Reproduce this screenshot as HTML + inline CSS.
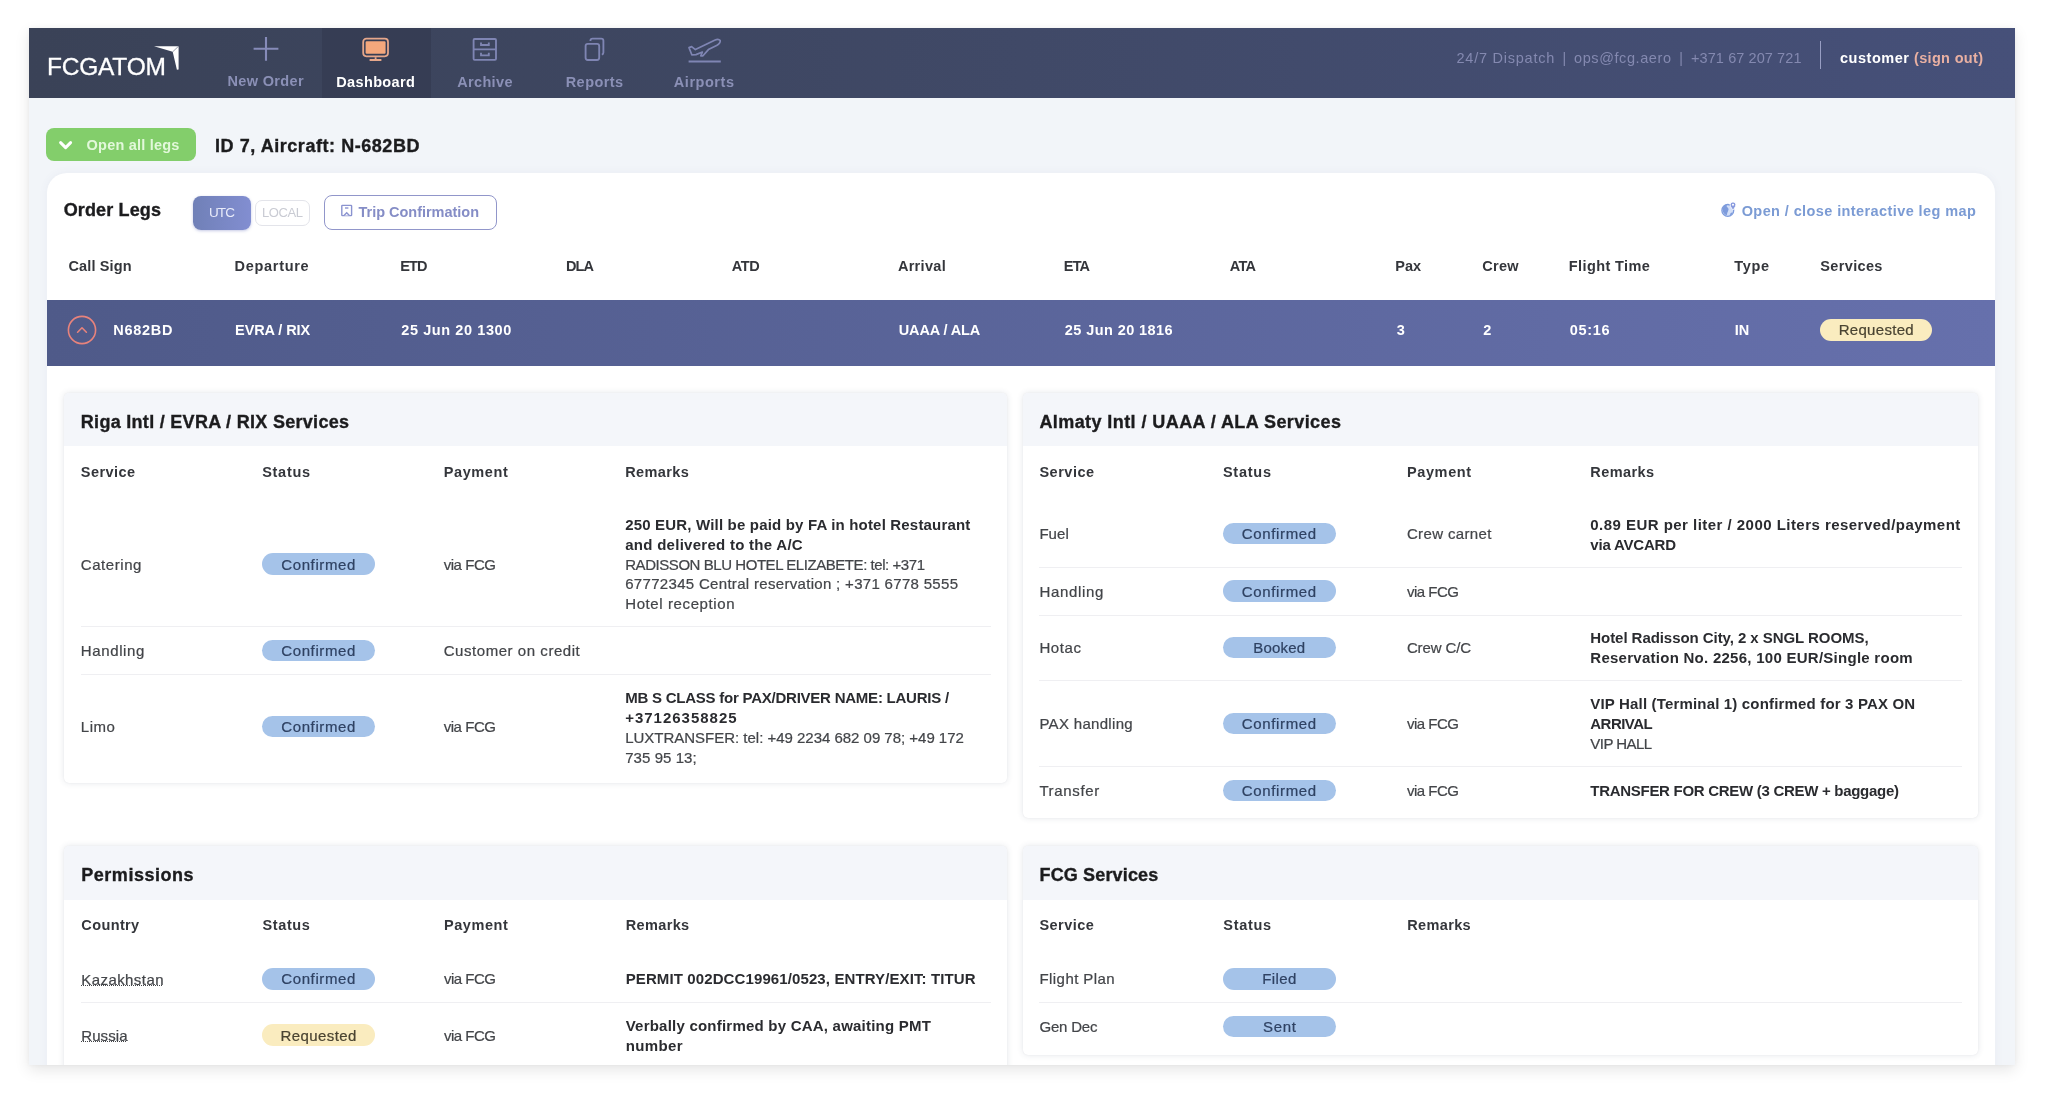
<!DOCTYPE html>
<html lang="en">
<head>
<meta charset="utf-8">
<title>FCG ATOM - Dashboard</title>
<style>
*{box-sizing:border-box;margin:0;padding:0}
html,body{width:2048px;height:1097px;overflow:hidden;background:#fff}
body{font-family:"Liberation Sans",sans-serif;color:#333;font-size:15px;position:relative}
.shadow{position:absolute;left:29px;top:28px;width:1986px;height:1037px;box-shadow:0 5px 14px rgba(0,0,0,.10),0 0 4px rgba(0,0,0,.04)}
.frame{will-change:transform;position:absolute;left:29px;top:28px;width:1986px;height:1037px;background:#f2f5f9;overflow:hidden}
.abs{position:absolute}
.t{position:absolute;white-space:pre}
.top{position:absolute;left:0;top:0;width:1986px;height:70px;background:linear-gradient(90deg,#3a4257 0%,#404967 50%,#465079 100%)}
.navon{position:absolute;left:293px;top:0;width:109px;height:70px;background:#363d54}
.vbar{position:absolute;left:1790.8px;top:13px;width:1.4px;height:27.5px;background:#989ec3}
.openall{position:absolute;left:17px;top:100px;width:149.5px;height:33px;border-radius:8px;background:#83ce6b}
.legs{position:absolute;left:18px;top:145px;width:1948px;height:920px;background:#fff;border-radius:20px 20px 0 0;box-shadow:0 0 10px rgba(80,90,130,.06)}
.utc{position:absolute;left:145.5px;top:23px;width:58.5px;height:33.5px;border-radius:8px;background:linear-gradient(90deg,#7080b7,#828ed1);box-shadow:0 1px 3px rgba(90,100,180,.35)}
.local{position:absolute;left:208px;top:27px;width:55px;height:25.5px;border-radius:7px;border:1px solid #e3e4ea;background:#fff}
.trip{position:absolute;left:276.5px;top:22px;width:173.5px;height:35px;border-radius:8px;border:1.6px solid #9196ca;background:#fff}
.row{position:absolute;left:0;top:127px;width:1948px;height:66px;background:linear-gradient(90deg,#4f5a89 0%,#6670ac 100%)}
.pill{position:absolute;border-radius:11px;background:#a5c3e9}
.pill.req{background:#faecbf}
.card{position:absolute;background:#fff;border-radius:5px;box-shadow:0 0 6px rgba(50,60,90,.13),0 0 1px rgba(50,60,90,.10);overflow:hidden}
.hd{position:absolute;left:0;top:0;right:0;height:53.5px;background:#f4f6fa}
.sep{position:absolute;height:1px;background:#efeff2}
.dot{text-decoration:underline dotted;text-underline-offset:0px;text-decoration-thickness:1.4px;text-decoration-skip-ink:none}
</style>
</head>
<body>
<div class="shadow"></div>
<div class="frame">
<div class="top"><div class="navon"></div>
<svg class="abs" style="left:120px;top:14px" width="34" height="32" viewBox="0 0 34 32"><path d="M5 4.2 L29.6 4.2 L29.6 27.5 L27.9 27.8 L23.7 9.8 Z" fill="#fff"/><path d="M23.7 9.8 L29.6 4.2" stroke="#3c4560" stroke-width=".55"/></svg>
<svg class="abs" style="left:222.7px;top:8px" width="28" height="28" viewBox="0 0 28 28"><path d="M1.6 12.8H26.4M14 1V24.8" stroke="#868bb9" stroke-width="2.1" fill="none"/></svg>
<svg class="abs" style="left:331px;top:8px" width="32" height="28" viewBox="0 0 32 28"><rect x="3.2" y="2.7" width="24.8" height="17.6" rx="3.2" fill="none" stroke="#e6a78b" stroke-width="1.8"/><rect x="5.6" y="5.2" width="20" height="12.6" rx="1.2" fill="#f4a77c"/><path d="M15.6 21.2V23.6M9.6 24H21.4" stroke="#e6a78b" stroke-width="1.8" fill="none"/></svg>
<svg class="abs" style="left:442px;top:8px" width="30" height="28" viewBox="0 0 30 28"><g stroke="#7f85b3" stroke-width="1.85" fill="none"><rect x="2.6" y="3" width="22.4" height="20.8" rx="1"/><path d="M2.6 13.3H25M10 6.6V9H17.8V6.6M10 16.8V19.4H17.8V16.8"/></g></svg>
<svg class="abs" style="left:553.5px;top:8px" width="26" height="28" viewBox="0 0 26 28"><g stroke="#7f85b3" stroke-width="1.85" fill="none"><rect x="2.6" y="7.8" width="13.6" height="16.2" rx="2.2"/><path d="M7.4 5V4.8A2.2 2.2 0 0 1 9.6 2.6H18.2A2.2 2.2 0 0 1 20.4 4.8V16.6A2.2 2.2 0 0 1 18.8 18.7"/></g></svg>
<svg class="abs" style="left:657px;top:8px" width="38" height="30" viewBox="0 0 38 30"><g stroke="#7f85b3" fill="none" stroke-linejoin="round"><path stroke-width="1.7" d="M3 11.6 L5.6 10.6 L9.4 13.6 L28.6 4.2 Q32.6 2.4 34.2 4.6 Q34.6 7.2 30.6 9.4 L22.4 13.6 L17 19.8 L14.8 19.8 L16.4 16 L10 18.6 L5.8 18.8 Z"/><path stroke-width="2" d="M2.6 25.6H34.8"/></g></svg>

<div class="t" style="left:17.9px;top:24.7px;font-size:24.5px;font-weight:400;line-height:28px;color:#fff;-webkit-text-stroke:.3px #fff;letter-spacing:-0.189px;">FCGATOM</div>
<div class="t" style="left:198.5px;top:42.9px;font-size:14.5px;font-weight:700;line-height:20px;color:#8b90b6;letter-spacing:0.345px;">New Order</div>
<div class="t" style="left:307.3px;top:43.7px;font-size:14.5px;font-weight:700;line-height:20px;color:#fff;letter-spacing:0.344px;">Dashboard</div>
<div class="t" style="left:428.2px;top:43.7px;font-size:14.5px;font-weight:700;line-height:20px;color:#8b90b6;letter-spacing:0.349px;">Archive</div>
<div class="t" style="left:536.7px;top:43.7px;font-size:14.5px;font-weight:700;line-height:20px;color:#8b90b6;letter-spacing:0.451px;">Reports</div>
<div class="t" style="left:644.8px;top:43.7px;font-size:14.5px;font-weight:700;line-height:20px;color:#8b90b6;letter-spacing:0.542px;">Airports</div>
<div class="t" style="left:1427.5px;top:20.0px;font-size:14.5px;font-weight:400;line-height:20px;color:#8489b0;letter-spacing:0.761px;">24/7 Dispatch</div>
<div class="t" style="left:1533.6px;top:19.5px;font-size:14px;font-weight:400;line-height:20px;color:#8489b0;">|</div>
<div class="t" style="left:1545.0px;top:20.0px;font-size:14.5px;font-weight:400;line-height:20px;color:#8489b0;letter-spacing:0.591px;">ops@fcg.aero</div>
<div class="t" style="left:1650.2px;top:19.5px;font-size:14px;font-weight:400;line-height:20px;color:#8489b0;">|</div>
<div class="t" style="left:1662.0px;top:20.0px;font-size:14.5px;font-weight:400;line-height:20px;color:#8489b0;letter-spacing:0.088px;">+371 67 207 721</div>
<div class="t" style="left:1811.0px;top:20.0px;font-size:14.5px;font-weight:700;line-height:20px;color:#fff;letter-spacing:0.531px;">customer</div>
<div class="t" style="left:1885.0px;top:20.0px;font-size:14.5px;font-weight:700;line-height:20px;color:#e9b0a2;letter-spacing:0.328px;">(sign out)</div>
<div class="vbar"></div></div>
<div class="openall"><svg class="abs" style="left:12px;top:11px" width="16" height="12" viewBox="0 0 16 12"><path d="M2.6 3.6 L7.6 8.6 L12.6 3.6" stroke="#fff" stroke-width="3" fill="none" stroke-linecap="round" stroke-linejoin="round"/></svg></div>
<div class="t" style="left:57.6px;top:106.5px;font-size:14.5px;font-weight:700;line-height:20px;color:#e2f8da;letter-spacing:0.213px;">Open all legs</div>
<div class="t" style="left:186.0px;top:106.1px;font-size:18px;font-weight:700;line-height:24px;color:#1c1c1e;-webkit-text-stroke:.35px #1c1c1e;letter-spacing:0.550px;">ID 7, Aircraft: N-682BD</div>
<div class="legs">
<div class="utc"></div><div class="local"></div>
<div class="trip"><svg class="abs" style="left:14px;top:7px" width="15" height="16" viewBox="0 0 15 16"><g stroke="#8a93d0" stroke-width="1.4" fill="none"><rect x="2.8" y="2.4" width="9.8" height="10.2" rx=".6"/><path d="M5 12.4 L7.7 9.8 L10.4 12.4" fill="#fff"/><path d="M6 5H9.4"/></g></svg></div>
<svg class="abs" style="left:1674.0px;top:27.5px" width="17" height="18" viewBox="0 0 17 18"><circle cx="6.8" cy="9.4" r="5.9" fill="#d3dff7" stroke="#7d9bdc" stroke-width="1.3"/><path d="M1.6 8.2q.6-3.6 4-4.6q-.4 2.2 1.2 3.2t.2 3.4t-1 3.8q-1.6 0-3-1.6t-1.400-4.200z" fill="#7d9bdc"/><path d="M8.600 14.6q2.600-1 3.200-3.400q-2 .2-2.400 1.400t-.8 2z" fill="#7d9bdc"/><path d="M12 .9a2.900 2.900 0 0 1 2.900 2.900c0 2.100-2.900 5.200-2.900 5.200s-2.900-3.100-2.900-5.200a2.900 2.900 0 0 1 2.900-2.900z" fill="#8799de" stroke="#fff" stroke-width=".9"/><circle cx="12" cy="3.800" r="1.050" fill="#fff"/></svg>
<div class="row"><svg class="abs" style="left:20.4px;top:14.6px" width="30" height="30" viewBox="0 0 30 30"><circle cx="15" cy="15" r="13.6" stroke="#e8837c" stroke-width="1.6" fill="none"/><path d="M10.6 17.2 L15 12.8 L19.4 17.2" stroke="#e8837c" stroke-width="1.6" fill="none" stroke-linecap="round" stroke-linejoin="round"/></svg></div>
<div class="pill req" style="left:1773.3px;top:145.6px;width:112px;height:22px"></div>
<div class="t" style="left:16.7px;top:25.1px;font-size:18px;font-weight:700;line-height:24px;color:#1c1c1e;-webkit-text-stroke:.35px #1c1c1e;letter-spacing:0.141px;">Order Legs</div>
<div class="t" style="left:162.0px;top:29.5px;font-size:13.5px;font-weight:400;line-height:20px;color:#e9ecfa;letter-spacing:-0.875px;">UTC</div>
<div class="t" style="left:215.0px;top:29.5px;font-size:13px;font-weight:400;line-height:20px;color:#c9cbd3;letter-spacing:-0.410px;">LOCAL</div>
<div class="t" style="left:311.5px;top:29.0px;font-size:14.5px;font-weight:700;line-height:20px;color:#858dc6;letter-spacing:-0.021px;">Trip Confirmation</div>
<div class="t" style="left:1694.7px;top:27.5px;font-size:14.5px;font-weight:700;line-height:20px;color:#7b9bd4;letter-spacing:0.403px;">Open / close interactive leg map</div>
<div class="t" style="left:21.5px;top:83.0px;font-size:14.5px;font-weight:700;line-height:20px;color:#34363b;letter-spacing:0.132px;">Call Sign</div>
<div class="t" style="left:187.6px;top:83.0px;font-size:14.5px;font-weight:700;line-height:20px;color:#34363b;letter-spacing:0.688px;">Departure</div>
<div class="t" style="left:353.3px;top:83.0px;font-size:14.5px;font-weight:700;line-height:20px;color:#34363b;letter-spacing:-0.950px;">ETD</div>
<div class="t" style="left:519.0px;top:83.0px;font-size:14.5px;font-weight:700;line-height:20px;color:#34363b;letter-spacing:-0.856px;">DLA</div>
<div class="t" style="left:684.7px;top:83.0px;font-size:14.5px;font-weight:700;line-height:20px;color:#34363b;letter-spacing:-0.317px;">ATD</div>
<div class="t" style="left:850.9px;top:83.0px;font-size:14.5px;font-weight:700;line-height:20px;color:#34363b;letter-spacing:0.308px;">Arrival</div>
<div class="t" style="left:1016.8px;top:83.0px;font-size:14.5px;font-weight:700;line-height:20px;color:#34363b;letter-spacing:-0.819px;">ETA</div>
<div class="t" style="left:1182.8px;top:83.0px;font-size:14.5px;font-weight:700;line-height:20px;color:#34363b;letter-spacing:-0.678px;">ATA</div>
<div class="t" style="left:1348.3px;top:83.0px;font-size:14.5px;font-weight:700;line-height:20px;color:#34363b;letter-spacing:-0.006px;">Pax</div>
<div class="t" style="left:1435.3px;top:83.0px;font-size:14.5px;font-weight:700;line-height:20px;color:#34363b;letter-spacing:0.277px;">Crew</div>
<div class="t" style="left:1521.8px;top:83.0px;font-size:14.5px;font-weight:700;line-height:20px;color:#34363b;letter-spacing:0.392px;">Flight Time</div>
<div class="t" style="left:1687.3px;top:83.0px;font-size:14.5px;font-weight:700;line-height:20px;color:#34363b;letter-spacing:0.673px;">Type</div>
<div class="t" style="left:1773.3px;top:83.0px;font-size:14.5px;font-weight:700;line-height:20px;color:#34363b;letter-spacing:0.347px;">Services</div>
<div class="t" style="left:66.3px;top:146.8px;font-size:14.5px;font-weight:700;line-height:20px;color:#fff;letter-spacing:0.718px;">N682BD</div>
<div class="t" style="left:188.1px;top:146.8px;font-size:14.5px;font-weight:700;line-height:20px;color:#fff;letter-spacing:-0.113px;">EVRA / RIX</div>
<div class="t" style="left:354.3px;top:146.8px;font-size:14.5px;font-weight:700;line-height:20px;color:#fff;letter-spacing:0.585px;">25 Jun 20 1300</div>
<div class="t" style="left:851.8px;top:146.8px;font-size:14.5px;font-weight:700;line-height:20px;color:#fff;letter-spacing:-0.145px;">UAAA / ALA</div>
<div class="t" style="left:1017.8px;top:146.8px;font-size:14.5px;font-weight:700;line-height:20px;color:#fff;letter-spacing:0.416px;">25 Jun 20 1816</div>
<div class="t" style="left:1349.8px;top:146.8px;font-size:14.5px;font-weight:700;line-height:20px;color:#fff;">3</div>
<div class="t" style="left:1436.3px;top:146.8px;font-size:14.5px;font-weight:700;line-height:20px;color:#fff;">2</div>
<div class="t" style="left:1522.8px;top:146.8px;font-size:14.5px;font-weight:700;line-height:20px;color:#fff;letter-spacing:0.652px;">05:16</div>
<div class="t" style="left:1687.8px;top:146.8px;font-size:14.5px;font-weight:700;line-height:20px;color:#fff;letter-spacing:-0.100px;">IN</div>
<div class="t" style="left:1791.7px;top:146.6px;font-size:15px;font-weight:400;line-height:20px;color:#4a4432;-webkit-text-stroke:.22px #4a4432;letter-spacing:0.305px;">Requested</div>
<div class="card" style="left:16.5px;top:219.5px;width:943.3px;height:390.8px">
<div class="hd"></div>
<div class="pill" style="left:198.9px;top:160.8px;width:113.0px;height:21.4px"></div>
<div class="pill" style="left:198.9px;top:247.0px;width:113.0px;height:21.4px"></div>
<div class="pill" style="left:198.9px;top:323.2px;width:113.0px;height:21.4px"></div>
<div class="t" style="left:17.3px;top:17.1px;font-size:18px;font-weight:700;line-height:24px;color:#1c1c1e;-webkit-text-stroke:.35px #1c1c1e;letter-spacing:0.293px;">Riga Intl / EVRA / RIX Services</div>
<div class="t" style="left:17.3px;top:69.1px;font-size:14.5px;font-weight:700;line-height:20px;color:#34363b;letter-spacing:0.432px;">Service</div>
<div class="t" style="left:198.7px;top:69.1px;font-size:14.5px;font-weight:700;line-height:20px;color:#34363b;letter-spacing:0.714px;">Status</div>
<div class="t" style="left:380.2px;top:69.1px;font-size:14.5px;font-weight:700;line-height:20px;color:#34363b;letter-spacing:0.608px;">Payment</div>
<div class="t" style="left:561.7px;top:69.1px;font-size:14.5px;font-weight:700;line-height:20px;color:#34363b;letter-spacing:0.389px;">Remarks</div>
<div class="t" style="left:17.3px;top:162.1px;font-size:15px;font-weight:400;line-height:20px;color:#434549;-webkit-text-stroke:.22px #434549;letter-spacing:0.557px;">Catering</div>
<div class="t" style="left:217.8px;top:162.0px;font-size:15px;font-weight:400;line-height:20px;color:#2f4263;-webkit-text-stroke:.22px #2f4263;letter-spacing:0.600px;">Confirmed</div>
<div class="t" style="left:380.2px;top:162.1px;font-size:15px;font-weight:400;line-height:20px;color:#434549;-webkit-text-stroke:.22px #434549;letter-spacing:-0.453px;">via FCG</div>
<div class="t" style="left:561.7px;top:122.3px;font-size:15px;font-weight:700;line-height:20px;color:#2a2b2f;letter-spacing:0.179px;">250 EUR, Will be paid by FA in hotel Restaurant</div>
<div class="t" style="left:561.7px;top:142.1px;font-size:15px;font-weight:700;line-height:20px;color:#2a2b2f;letter-spacing:0.276px;">and delivered to the A/C</div>
<div class="t" style="left:561.7px;top:162.0px;font-size:15px;font-weight:400;line-height:20px;color:#434549;-webkit-text-stroke:.22px #434549;letter-spacing:-0.443px;">RADISSON BLU HOTEL ELIZABETE: tel: +371</div>
<div class="t" style="left:561.7px;top:181.7px;font-size:15px;font-weight:400;line-height:20px;color:#434549;-webkit-text-stroke:.22px #434549;letter-spacing:0.314px;">67772345 Central reservation ; +371 6778 5555</div>
<div class="t" style="left:561.7px;top:201.5px;font-size:15px;font-weight:400;line-height:20px;color:#434549;-webkit-text-stroke:.22px #434549;letter-spacing:0.607px;">Hotel reception</div>
<div class="t" style="left:17.3px;top:248.1px;font-size:15px;font-weight:400;line-height:20px;color:#434549;-webkit-text-stroke:.22px #434549;letter-spacing:0.626px;">Handling</div>
<div class="t" style="left:217.8px;top:248.2px;font-size:15px;font-weight:400;line-height:20px;color:#2f4263;-webkit-text-stroke:.22px #2f4263;letter-spacing:0.600px;">Confirmed</div>
<div class="t" style="left:380.2px;top:248.1px;font-size:15px;font-weight:400;line-height:20px;color:#434549;-webkit-text-stroke:.22px #434549;letter-spacing:0.552px;">Customer on credit</div>
<div class="t" style="left:17.3px;top:324.5px;font-size:15px;font-weight:400;line-height:20px;color:#434549;-webkit-text-stroke:.22px #434549;letter-spacing:0.495px;">Limo</div>
<div class="t" style="left:217.8px;top:324.4px;font-size:15px;font-weight:400;line-height:20px;color:#2f4263;-webkit-text-stroke:.22px #2f4263;letter-spacing:0.600px;">Confirmed</div>
<div class="t" style="left:380.2px;top:324.5px;font-size:15px;font-weight:400;line-height:20px;color:#434549;-webkit-text-stroke:.22px #434549;letter-spacing:-0.453px;">via FCG</div>
<div class="t" style="left:561.7px;top:295.5px;font-size:15px;font-weight:700;line-height:20px;color:#2a2b2f;letter-spacing:-0.235px;">MB S CLASS for PAX/DRIVER NAME: LAURIS /</div>
<div class="t" style="left:561.7px;top:315.5px;font-size:15px;font-weight:700;line-height:20px;color:#2a2b2f;letter-spacing:0.988px;">+37126358825</div>
<div class="t" style="left:561.7px;top:335.1px;font-size:15px;font-weight:400;line-height:20px;color:#434549;-webkit-text-stroke:.22px #434549;letter-spacing:-0.016px;">LUXTRANSFER: tel: +49 2234 682 09 78; +49 172</div>
<div class="t" style="left:561.7px;top:355.0px;font-size:15px;font-weight:400;line-height:20px;color:#434549;-webkit-text-stroke:.22px #434549;letter-spacing:0.066px;">735 95 13;</div>
<div class="sep" style="left:17.5px;width:909.5px;top:233.8px"></div>
<div class="sep" style="left:17.5px;width:909.5px;top:281.4px"></div>
</div>
<div class="card" style="left:975.7px;top:219.5px;width:955.5px;height:425.2px">
<div class="hd"></div>
<div class="pill" style="left:200.3px;top:130.4px;width:113.0px;height:21.4px"></div>
<div class="pill" style="left:200.3px;top:187.9px;width:113.0px;height:21.4px"></div>
<div class="pill" style="left:200.3px;top:244.4px;width:113.0px;height:21.4px"></div>
<div class="pill" style="left:200.3px;top:320.4px;width:113.0px;height:21.4px"></div>
<div class="pill" style="left:200.3px;top:387.1px;width:113.0px;height:21.4px"></div>
<div class="t" style="left:16.7px;top:17.4px;font-size:18px;font-weight:700;line-height:24px;color:#1c1c1e;-webkit-text-stroke:.35px #1c1c1e;letter-spacing:0.423px;">Almaty Intl / UAAA / ALA Services</div>
<div class="t" style="left:16.7px;top:69.1px;font-size:14.5px;font-weight:700;line-height:20px;color:#34363b;letter-spacing:0.515px;">Service</div>
<div class="t" style="left:200.2px;top:69.1px;font-size:14.5px;font-weight:700;line-height:20px;color:#34363b;letter-spacing:0.754px;">Status</div>
<div class="t" style="left:384.2px;top:69.1px;font-size:14.5px;font-weight:700;line-height:20px;color:#34363b;letter-spacing:0.641px;">Payment</div>
<div class="t" style="left:567.6px;top:69.1px;font-size:14.5px;font-weight:700;line-height:20px;color:#34363b;letter-spacing:0.439px;">Remarks</div>
<div class="t" style="left:16.7px;top:131.5px;font-size:15px;font-weight:400;line-height:20px;color:#434549;-webkit-text-stroke:.22px #434549;letter-spacing:0.071px;">Fuel</div>
<div class="t" style="left:219.0px;top:131.6px;font-size:15px;font-weight:400;line-height:20px;color:#2f4263;-webkit-text-stroke:.22px #2f4263;letter-spacing:0.662px;">Confirmed</div>
<div class="t" style="left:384.2px;top:131.5px;font-size:15px;font-weight:400;line-height:20px;color:#434549;-webkit-text-stroke:.22px #434549;letter-spacing:0.374px;">Crew carnet</div>
<div class="t" style="left:567.6px;top:122.1px;font-size:15px;font-weight:700;line-height:20px;color:#2a2b2f;letter-spacing:0.465px;">0.89 EUR per liter / 2000 Liters reserved/payment</div>
<div class="t" style="left:567.6px;top:142.1px;font-size:15px;font-weight:700;line-height:20px;color:#2a2b2f;letter-spacing:-0.203px;">via AVCARD</div>
<div class="t" style="left:16.7px;top:189.0px;font-size:15px;font-weight:400;line-height:20px;color:#434549;-webkit-text-stroke:.22px #434549;letter-spacing:0.669px;">Handling</div>
<div class="t" style="left:219.0px;top:189.1px;font-size:15px;font-weight:400;line-height:20px;color:#2f4263;-webkit-text-stroke:.22px #2f4263;letter-spacing:0.662px;">Confirmed</div>
<div class="t" style="left:384.2px;top:189.0px;font-size:15px;font-weight:400;line-height:20px;color:#434549;-webkit-text-stroke:.22px #434549;letter-spacing:-0.486px;">via FCG</div>
<div class="t" style="left:16.7px;top:245.5px;font-size:15px;font-weight:400;line-height:20px;color:#434549;-webkit-text-stroke:.22px #434549;letter-spacing:0.603px;">Hotac</div>
<div class="t" style="left:230.6px;top:245.6px;font-size:15px;font-weight:400;line-height:20px;color:#2f4263;-webkit-text-stroke:.22px #2f4263;letter-spacing:0.165px;">Booked</div>
<div class="t" style="left:384.2px;top:245.5px;font-size:15px;font-weight:400;line-height:20px;color:#434549;-webkit-text-stroke:.22px #434549;letter-spacing:-0.102px;">Crew C/C</div>
<div class="t" style="left:567.6px;top:235.7px;font-size:15px;font-weight:700;line-height:20px;color:#2a2b2f;letter-spacing:-0.058px;">Hotel Radisson City, 2 x SNGL ROOMS,</div>
<div class="t" style="left:567.6px;top:255.7px;font-size:15px;font-weight:700;line-height:20px;color:#2a2b2f;letter-spacing:0.265px;">Reservation No. 2256, 100 EUR/Single room</div>
<div class="t" style="left:16.7px;top:321.5px;font-size:15px;font-weight:400;line-height:20px;color:#434549;-webkit-text-stroke:.22px #434549;letter-spacing:0.318px;">PAX handling</div>
<div class="t" style="left:219.0px;top:321.6px;font-size:15px;font-weight:400;line-height:20px;color:#2f4263;-webkit-text-stroke:.22px #2f4263;letter-spacing:0.662px;">Confirmed</div>
<div class="t" style="left:384.2px;top:321.5px;font-size:15px;font-weight:400;line-height:20px;color:#434549;-webkit-text-stroke:.22px #434549;letter-spacing:-0.486px;">via FCG</div>
<div class="t" style="left:567.6px;top:301.9px;font-size:15px;font-weight:700;line-height:20px;color:#2a2b2f;letter-spacing:0.170px;">VIP Hall (Terminal 1) confirmed for 3 PAX ON</div>
<div class="t" style="left:567.6px;top:321.5px;font-size:15px;font-weight:700;line-height:20px;color:#2a2b2f;letter-spacing:-0.527px;">ARRIVAL</div>
<div class="t" style="left:567.6px;top:341.5px;font-size:15px;font-weight:400;line-height:20px;color:#434549;-webkit-text-stroke:.22px #434549;letter-spacing:-0.530px;">VIP HALL</div>
<div class="t" style="left:16.7px;top:388.2px;font-size:15px;font-weight:400;line-height:20px;color:#434549;-webkit-text-stroke:.22px #434549;letter-spacing:0.643px;">Transfer</div>
<div class="t" style="left:219.0px;top:388.3px;font-size:15px;font-weight:400;line-height:20px;color:#2f4263;-webkit-text-stroke:.22px #2f4263;letter-spacing:0.662px;">Confirmed</div>
<div class="t" style="left:384.2px;top:388.2px;font-size:15px;font-weight:400;line-height:20px;color:#434549;-webkit-text-stroke:.22px #434549;letter-spacing:-0.486px;">via FCG</div>
<div class="t" style="left:567.6px;top:388.2px;font-size:15px;font-weight:700;line-height:20px;color:#2a2b2f;letter-spacing:-0.288px;">TRANSFER FOR CREW (3 CREW + baggage)</div>
<div class="sep" style="left:16.7px;width:923.1px;top:174.1px"></div>
<div class="sep" style="left:16.7px;width:923.1px;top:222.2px"></div>
<div class="sep" style="left:16.7px;width:923.1px;top:287.4px"></div>
<div class="sep" style="left:16.7px;width:923.1px;top:373.2px"></div>
</div>
<div class="card" style="left:16.5px;top:673.2px;width:943.3px;height:260.0px">
<div class="hd"></div>
<div class="pill" style="left:198.9px;top:122.1px;width:113.0px;height:21.4px"></div>
<div class="pill req" style="left:198.9px;top:178.3px;width:113.0px;height:21.4px"></div>
<div class="t" style="left:17.8px;top:17.3px;font-size:18px;font-weight:700;line-height:24px;color:#1c1c1e;-webkit-text-stroke:.35px #1c1c1e;letter-spacing:0.514px;">Permissions</div>
<div class="t" style="left:17.8px;top:68.8px;font-size:14.5px;font-weight:700;line-height:20px;color:#34363b;letter-spacing:0.384px;">Country</div>
<div class="t" style="left:199.1px;top:68.8px;font-size:14.5px;font-weight:700;line-height:20px;color:#34363b;letter-spacing:0.574px;">Status</div>
<div class="t" style="left:380.4px;top:68.8px;font-size:14.5px;font-weight:700;line-height:20px;color:#34363b;letter-spacing:0.591px;">Payment</div>
<div class="t" style="left:562.2px;top:68.8px;font-size:14.5px;font-weight:700;line-height:20px;color:#34363b;letter-spacing:0.372px;">Remarks</div>
<div class="t dot" style="left:17.8px;top:123.5px;font-size:15px;font-weight:400;line-height:20px;color:#434549;-webkit-text-stroke:.22px #434549;letter-spacing:0.423px;"><span class="dot">Kazakhstan</span></div>
<div class="t" style="left:217.8px;top:123.3px;font-size:15px;font-weight:400;line-height:20px;color:#2f4263;-webkit-text-stroke:.22px #2f4263;letter-spacing:0.600px;">Confirmed</div>
<div class="t" style="left:380.4px;top:123.3px;font-size:15px;font-weight:400;line-height:20px;color:#434549;-webkit-text-stroke:.22px #434549;letter-spacing:-0.486px;">via FCG</div>
<div class="t" style="left:562.2px;top:123.3px;font-size:15px;font-weight:700;line-height:20px;color:#2a2b2f;letter-spacing:0.110px;">PERMIT 002DCC19961/0523, ENTRY/EXIT: TITUR</div>
<div class="t dot" style="left:17.8px;top:179.8px;font-size:15px;font-weight:400;line-height:20px;color:#434549;-webkit-text-stroke:.22px #434549;letter-spacing:0.068px;"><span class="dot">Russia</span></div>
<div class="t" style="left:217.1px;top:179.5px;font-size:15px;font-weight:400;line-height:20px;color:#4a4432;-webkit-text-stroke:.22px #4a4432;letter-spacing:0.392px;">Requested</div>
<div class="t" style="left:380.4px;top:179.4px;font-size:15px;font-weight:400;line-height:20px;color:#434549;-webkit-text-stroke:.22px #434549;letter-spacing:-0.486px;">via FCG</div>
<div class="t" style="left:562.2px;top:170.0px;font-size:15px;font-weight:700;line-height:20px;color:#2a2b2f;letter-spacing:0.223px;">Verbally confirmed by CAA, awaiting PMT</div>
<div class="t" style="left:562.2px;top:189.8px;font-size:15px;font-weight:700;line-height:20px;color:#2a2b2f;letter-spacing:0.377px;">number</div>
<div class="sep" style="left:17.5px;width:909.5px;top:156.0px"></div>
</div>
<div class="card" style="left:975.7px;top:673.2px;width:955.5px;height:208.6px">
<div class="hd"></div>
<div class="pill" style="left:200.6px;top:122.1px;width:113.0px;height:21.4px"></div>
<div class="pill" style="left:200.6px;top:169.9px;width:113.0px;height:21.4px"></div>
<div class="t" style="left:16.8px;top:17.3px;font-size:18px;font-weight:700;line-height:24px;color:#1c1c1e;-webkit-text-stroke:.35px #1c1c1e;letter-spacing:0.158px;">FCG Services</div>
<div class="t" style="left:16.8px;top:68.8px;font-size:14.5px;font-weight:700;line-height:20px;color:#34363b;letter-spacing:0.448px;">Service</div>
<div class="t" style="left:200.6px;top:68.8px;font-size:14.5px;font-weight:700;line-height:20px;color:#34363b;letter-spacing:0.694px;">Status</div>
<div class="t" style="left:384.5px;top:68.8px;font-size:14.5px;font-weight:700;line-height:20px;color:#34363b;letter-spacing:0.372px;">Remarks</div>
<div class="t" style="left:16.8px;top:123.3px;font-size:15px;font-weight:400;line-height:20px;color:#434549;-webkit-text-stroke:.22px #434549;letter-spacing:0.433px;">Flight Plan</div>
<div class="t" style="left:239.6px;top:123.3px;font-size:15px;font-weight:400;line-height:20px;color:#2f4263;-webkit-text-stroke:.22px #2f4263;letter-spacing:0.371px;">Filed</div>
<div class="t" style="left:16.8px;top:171.0px;font-size:15px;font-weight:400;line-height:20px;color:#434549;-webkit-text-stroke:.22px #434549;letter-spacing:-0.217px;">Gen Dec</div>
<div class="t" style="left:240.3px;top:171.1px;font-size:15px;font-weight:400;line-height:20px;color:#2f4263;-webkit-text-stroke:.22px #2f4263;letter-spacing:0.714px;">Sent</div>
<div class="sep" style="left:16.8px;width:923.0px;top:156.0px"></div>
</div>
</div>
</div>
</body>
</html>
